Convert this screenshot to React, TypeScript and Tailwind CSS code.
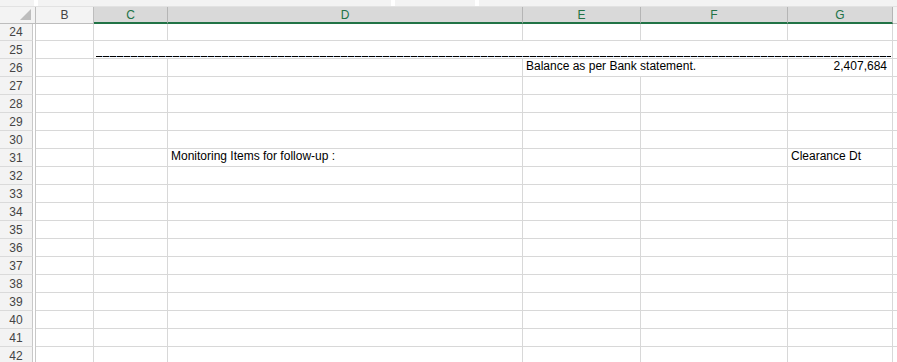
import React from 'react';

const cols = [
  { key: 'B', w: 'w-[58px]' },
  { key: 'C', w: 'w-[74px]' },
  { key: 'D', w: 'w-[355px]' },
  { key: 'E', w: 'w-[118px]' },
  { key: 'F', w: 'w-[147px]' },
  { key: 'G', w: 'w-[105px]' },
];

const rows = Array.from({ length: 19 }, (_, i) => 24 + i);

function RowHead({ n }: { n: number }) {
  return (
    <>
      <div className="w-[33px] shrink-0 bg-[#f3f3f3] border-r border-b border-r-[#c8c8c8] border-b-[#dadada] flex items-center justify-center text-[12px] text-[#444]">
        {n}
      </div>
      <div className="w-[3px] shrink-0 border-r border-[#c8c8c8]" />
    </>
  );
}

function Cell({ w, children, className = '' }: { w: string; children?: React.ReactNode; className?: string }) {
  return (
    <div className={`${w} shrink-0 border-r border-b border-[#d8d8d8] flex items-end overflow-hidden whitespace-nowrap ${className}`}>
      {children}
    </div>
  );
}

function Row({ n }: { n: number }) {
  const h = n === 24 ? 'h-[17px]' : 'h-[18px]';
  if (n === 25) {
    return (
      <div className={`flex ${h}`}>
        <RowHead n={n} />
        <Cell w="w-[58px]" />
        <Cell w="w-[799px]" className="pl-[2px] pr-[1px] pb-[1px]">
          <div className="h-px w-full bg-[repeating-linear-gradient(90deg,#000_0_6px,#7a9fd0_6px_7px)]" />
        </Cell>
        <div className="flex-1 border-b border-[#d8d8d8]" />
      </div>
    );
  }
  if (n === 26) {
    return (
      <div className={`flex ${h}`}>
        <RowHead n={n} />
        <Cell w="w-[58px]" />
        <Cell w="w-[74px]" />
        <Cell w="w-[355px]" />
        <Cell w="w-[265px]" className="pl-[3px] pb-[1px]">Balance as per Bank statement.</Cell>
        <Cell w="w-[105px]" className="justify-end pr-[5px] pb-[1px]">2,407,684</Cell>
        <div className="flex-1 border-b border-[#d8d8d8]" />
      </div>
    );
  }
  return (
    <div className={`flex ${h}`}>
      <RowHead n={n} />
      {cols.map((c) => (
        <Cell key={c.key} w={c.w} className="pl-[3px] pb-[1px]">
          {n === 31 && c.key === 'D' ? 'Monitoring Items for follow-up :' : null}
          {n === 31 && c.key === 'G' ? 'Clearance Dt' : null}
        </Cell>
      ))}
      <div className="flex-1 border-b border-[#d8d8d8]" />
    </div>
  );
}

export default function App() {
  return (
    <div className="w-[897px] h-[362px] overflow-hidden bg-white text-black text-[12px] font-['Liberation_Sans',Arial,sans-serif]">
      {/* strip above the headers */}
      <div className="h-[7px] flex bg-[#f3f3f3] border-b border-[#e2e2e2]">
        <div className="w-[34px]" />
        <div className="w-[4px] bg-white" />
        <div className="w-[353px]" />
        <div className="w-[4px] bg-white" />
        <div className="w-[80px]" />
        <div className="w-[4px] bg-white" />
      </div>

      {/* column headers */}
      <div className="flex h-[17px]">
        <div className="w-[36px] shrink-0 bg-[#f3f3f3] border-r border-b border-[#bdbdbd] relative">
          <svg className="absolute right-[4px] bottom-[3px]" width="11" height="11" viewBox="0 0 11 11">
            <path d="M11 0 L11 11 L0 11 Z" fill="#bdbdbd" />
          </svg>
        </div>
        {cols.map((c) =>
          c.key === 'B' ? (
            <div key={c.key} className={`${c.w} shrink-0 bg-[#f3f3f3] border-r border-b border-[#bdbdbd] flex items-center justify-center text-[12px] text-[#444]`}>
              {c.key}
            </div>
          ) : (
            <div key={c.key} className={`${c.w} shrink-0 bg-[#d9d9d9] border-r border-[#b5b5b5] border-b-2 border-b-[#217346] flex items-center justify-center text-[12px] text-[#217346]`}>
              {c.key}
            </div>
          )
        )}
        <div className="flex-1 bg-[#f3f3f3] border-b border-[#bdbdbd]" />
      </div>

      {rows.map((n) => (
        <Row key={n} n={n} />
      ))}
    </div>
  );
}
